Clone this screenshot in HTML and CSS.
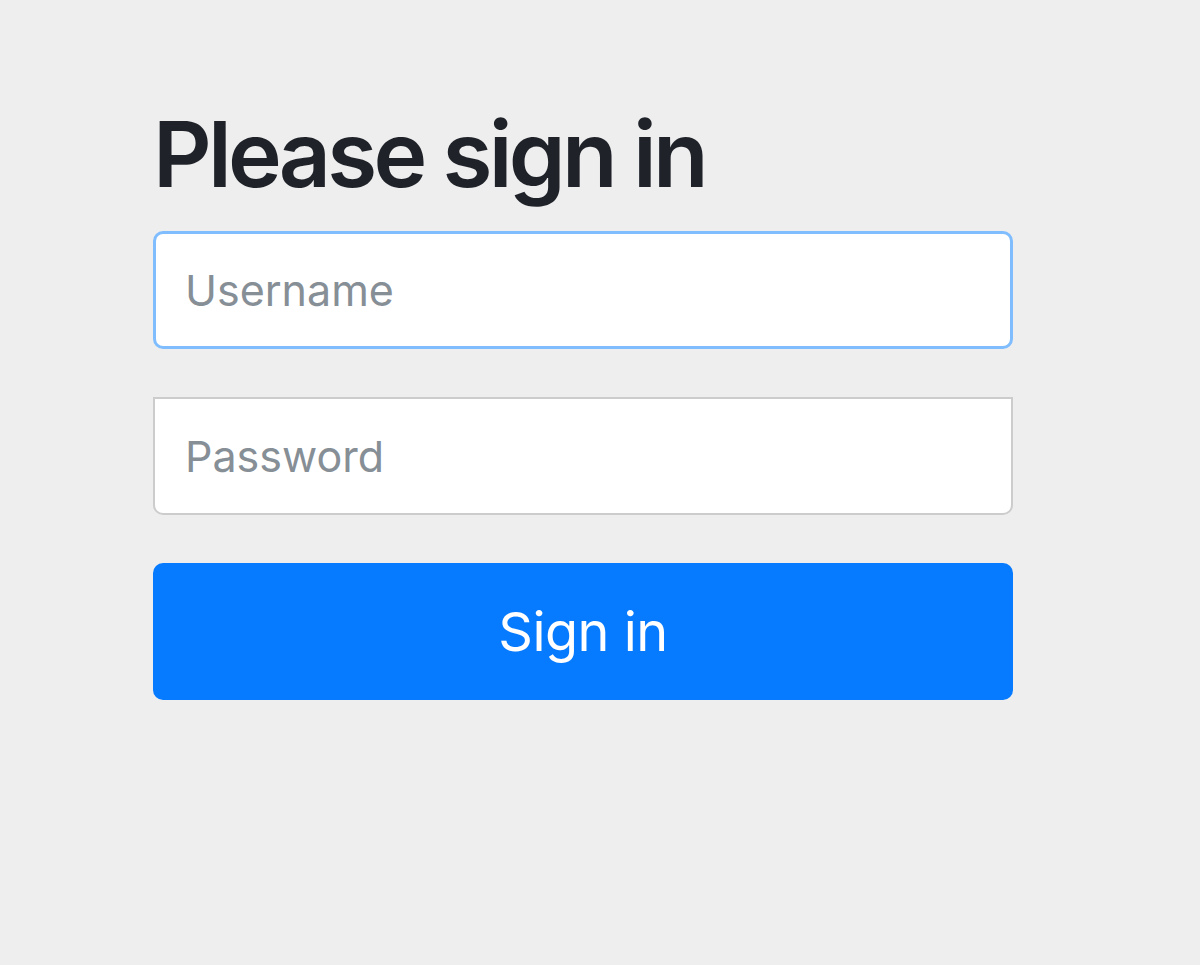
FILE: index.html
```html
<!DOCTYPE html>
<html lang="en">
<head>
<meta charset="utf-8">
<title>Please sign in</title>
<link rel="stylesheet" href="styles.css">
</head>
<body>
<div class="container">
  <form class="form-signin">
    <h2 class="form-signin-heading">Please sign in</h2>
    <input class="form-control form-control-first is-focused" type="text" placeholder="Username">
    <input class="form-control form-control-last" type="password" placeholder="Password">
    <button class="btn-primary" type="button">Sign in</button>
  </form>
</div>
</body>
</html>
```

FILE: styles.css
```css
html, body {
  margin: 0;
  padding: 0;
  background: #eeeeee;
  height: 100%;
}
body {
  font-family: Inter, "Noto Sans", "Liberation Sans", sans-serif;
  color: #212529;
}
.container {
  padding: 104px 0 0 153px;
}
.form-signin {
  width: 860px;
  display: flex;
  flex-direction: column;
}
.form-signin-heading {
  margin: 0 0 27px 0;
  font-size: 91px;
  font-weight: 600;
  line-height: 100px;
  letter-spacing: -3.8px;
  color: #1f2329;
}
.form-control {
  box-sizing: border-box;
  width: 860px;
  height: 118px;
  margin: 0 0 48px 0;
  padding: 0 30px;
  background: #ffffff;
  border: 2px solid #cccccc;
  border-radius: 10px;
  font-family: Inter, "Noto Sans", "Liberation Sans", sans-serif;
  font-size: 43px;
  color: #495057;
  outline: none;
}
.form-control::placeholder {
  color: #868e96;
  opacity: 1;
}
.form-control.is-focused {
  border: 3px solid #80bdff;
  padding: 0 29px;
}
.form-control-last {
  border-top-left-radius: 0;
  border-top-right-radius: 0;
}
.btn-primary {
  box-sizing: border-box;
  width: 860px;
  height: 137px;
  border: none;
  border-radius: 10px;
  background: #077bff;
  color: #ffffff;
  font-family: Inter, "Noto Sans", "Liberation Sans", sans-serif;
  font-size: 54px;
  font-weight: 400;
  letter-spacing: -0.5px;
  cursor: pointer;
}
```
